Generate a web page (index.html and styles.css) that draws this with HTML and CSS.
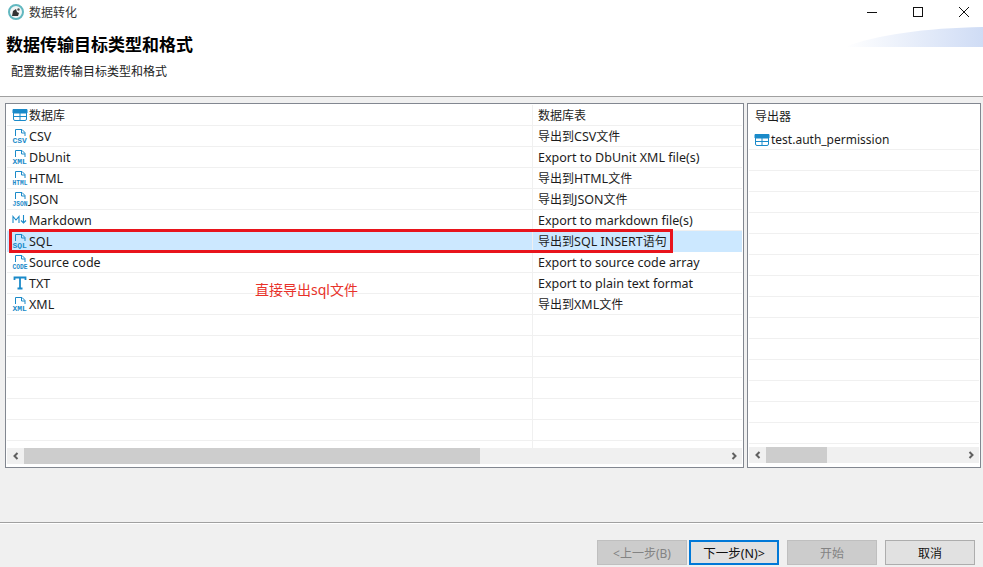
FILE: index.html
```html
<!DOCTYPE html>
<html lang="zh-CN">
<head>
    <meta charset="UTF-8">
    <meta name="viewport" content="width=device-width, initial-scale=1.0">
    <title>数据转化</title>
    <link rel="stylesheet" href="styles.css">
</head>
<body>
    <svg class="defs" width="0" height="0">
        <symbol id="file" viewBox="0 0 16 16">
            <path d="M3.500 8V1.500h6.500l3 3V8M9.500 1.500V5h3.500" fill="none" stroke="#1a8ac9" stroke-width="1"/>
        </symbol>
        <symbol id="table" viewBox="0 0 16 16">
            <rect x="1.500" y="2.500" width="13" height="11" rx="1.500" fill="#fff" stroke="#1a8ac9"/>
            <path d="M1 2.500h14V6H1zM8 6v8M1 9.500h14" fill="#1a8ac9" stroke="#1a8ac9"/>
        </symbol>
        <symbol id="left" viewBox="0 0 8 8">
            <path d="M5.500 1L2.500 4l3 3" fill="none" stroke="#606060" stroke-width="2"/>
        </symbol>
        <symbol id="right" viewBox="0 0 8 8">
            <path d="M2.500 1l3 3-3 3" fill="none" stroke="#606060" stroke-width="2"/>
        </symbol>
    </svg>

    <div class="header">
        <svg class="swoosh" width="138" height="21" viewBox="0 0 138 21">
            <defs>
                <linearGradient id="swooshFill" x1="0" x2="1" y1="0" y2="0">
                    <stop offset="0" stop-color="#ffffff"/>
                    <stop offset="1" stop-color="#cfdcf5"/>
                </linearGradient>
            </defs>
            <path d="M0 20C30 8 80 1 138 0V20Z" fill="url(#swooshFill)"/>
        </svg>
        <div class="titlebar">
            <svg class="logo" width="16" height="16" viewBox="0 0 16 16">
                <circle cx="8" cy="8" r="7" fill="#f2f6f6" stroke="#62b8c0" stroke-width="2"/>
                <path d="M4 12l1-5 3-2 1 3 2 1-1 3z" fill="#333"/>
                <circle cx="10.500" cy="5.500" r="1.200" fill="#555"/>
            </svg>
            <span class="window-title">数据转化</span>
            <div class="window-controls">
                <svg width="12" height="12" viewBox="0 0 12 12"><path d="M1 6.500h10" stroke="#111"/></svg>
                <svg width="12" height="12" viewBox="0 0 12 12"><rect x="1.500" y="1.500" width="9" height="9" fill="none" stroke="#111"/></svg>
                <svg width="12" height="12" viewBox="0 0 12 12"><path d="M1 1l10 10M11 1L1 11" stroke="#111"/></svg>
            </div>
        </div>
        <h1>数据传输目标类型和格式</h1>
        <p class="subtitle">配置数据传输目标类型和格式</p>
    </div>

    <div class="content">
        <div class="panel panel-main">
            <div class="row">
                <div class="cell name"><svg class="icon"><use href="#table"/></svg><span class="zh">数据库</span></div>
                <div class="cell"><span class="zh">数据库表</span></div>
            </div>
            <div class="row">
                <div class="cell name"><svg class="icon"><use href="#file"/><text x="0.500" y="14.500" class="tag">CSV</text></svg>CSV</div>
                <div class="cell"><span class="zh">导出到</span>CSV<span class="zh">文件</span></div>
            </div>
            <div class="row">
                <div class="cell name"><svg class="icon"><use href="#file"/><text x="0.500" y="14.500" class="tag">XML</text></svg>DbUnit</div>
                <div class="cell">Export to DbUnit XML file(s)</div>
            </div>
            <div class="row">
                <div class="cell name"><svg class="icon"><use href="#file"/><text transform="translate(0.500 14.500) scale(0.78 1)" class="tag">HTML</text></svg>HTML</div>
                <div class="cell"><span class="zh">导出到</span>HTML<span class="zh">文件</span></div>
            </div>
            <div class="row">
                <div class="cell name"><svg class="icon"><use href="#file"/><text transform="translate(0.500 14.500) scale(0.78 1)" class="tag">JSON</text></svg>JSON</div>
                <div class="cell"><span class="zh">导出到</span>JSON<span class="zh">文件</span></div>
            </div>
            <div class="row">
                <div class="cell name"><svg class="icon"><path d="M1 11V4.500l3 3.500 3-3.500V11M11.500 3v8M9 8.500l2.500 2.500L14 8.500" fill="none" stroke="#1a8ac9" stroke-width="1.100"/></svg>Markdown</div>
                <div class="cell">Export to markdown file(s)</div>
            </div>
            <div class="row selected">
                <div class="cell name"><svg class="icon"><use href="#file"/><text x="0.500" y="14.500" class="tag">SQL</text></svg>SQL</div>
                <div class="cell"><span class="zh">导出到</span>SQL INSERT<span class="zh">语句</span></div>
            </div>
            <div class="row">
                <div class="cell name"><svg class="icon"><use href="#file"/><text transform="translate(0.500 14.500) scale(0.78 1)" class="tag">CODE</text></svg>Source code</div>
                <div class="cell">Export to source code array</div>
            </div>
            <div class="row">
                <div class="cell name"><svg class="icon"><path d="M2.500 5V2.500h11V5M8 2.500v10.500M5.500 13.500h5" fill="none" stroke="#1a8ac9" stroke-width="1.800"/></svg>TXT</div>
                <div class="cell">Export to plain text format</div>
            </div>
            <div class="row">
                <div class="cell name"><svg class="icon"><use href="#file"/><text x="0.500" y="14.500" class="tag">XML</text></svg>XML</div>
                <div class="cell"><span class="zh">导出到</span>XML<span class="zh">文件</span></div>
            </div>
            <div class="row"><div class="cell name"></div><div class="cell"></div></div>
            <div class="row"><div class="cell name"></div><div class="cell"></div></div>
            <div class="row"><div class="cell name"></div><div class="cell"></div></div>
            <div class="row"><div class="cell name"></div><div class="cell"></div></div>
            <div class="row"><div class="cell name"></div><div class="cell"></div></div>
            <div class="row"><div class="cell name"></div><div class="cell"></div></div>
            <div class="filler"><div class="name"></div></div>
            <div class="scrollbar">
                <span class="arrow"><svg width="8" height="8"><use href="#left"/></svg></span>
                <div class="track"><div class="thumb thumb-main"></div></div>
                <span class="arrow"><svg width="8" height="8"><use href="#right"/></svg></span>
            </div>
            <div class="callout"></div>
            <div class="note">直接导出sql文件</div>
        </div>

        <div class="panel panel-side">
            <div class="side-head">导出器</div>
            <div class="row"><div class="cell side-cell"><svg class="icon"><use href="#table"/></svg>test.auth_permission</div></div>
            <div class="row"></div><div class="row"></div><div class="row"></div><div class="row"></div>
            <div class="row"></div><div class="row"></div><div class="row"></div><div class="row"></div>
            <div class="row"></div><div class="row"></div><div class="row"></div><div class="row"></div>
            <div class="row"></div><div class="row"></div>
            <div class="filler-side"></div>
            <div class="scrollbar">
                <span class="arrow"><svg width="8" height="8"><use href="#left"/></svg></span>
                <div class="track"><div class="thumb thumb-side"></div></div>
                <span class="arrow"><svg width="8" height="8"><use href="#right"/></svg></span>
            </div>
        </div>
    </div>

    <div class="footer">
        <button class="btn" disabled>&lt;上一步(B)</button>
        <button class="btn btn-default">下一步(N)&gt;</button>
        <button class="btn btn-start" disabled>开始</button>
        <button class="btn btn-cancel">取消</button>
    </div>
</body>
</html>
```

FILE: styles.css
```css
body {
    margin: 0;
    width: 983px;
    height: 567px;
    overflow: hidden;
    display: flex;
    flex-direction: column;
    background-color: #f0f0f0;
    color: #1c1c1c;
    font-family: "Noto Sans", "Noto Sans CJK SC", sans-serif;
    font-size: 12px;
}
.defs {
    display: block;
    height: 0;
}
.header {
    position: relative;
    height: 96px;
    flex-shrink: 0;
    background: #fff;
    border-bottom: 1px solid #a0a0a0;
}
.swoosh {
    position: absolute;
    top: 27px;
    right: 0;
}
.titlebar {
    display: flex;
    align-items: center;
    height: 23px;
    padding-left: 8px;
}
.logo {
    margin-right: 5px;
}
.window-title {
    color: #333;
}
.window-controls {
    display: flex;
    gap: 34px;
    margin-left: auto;
    margin-right: 13px;
}
h1 {
    margin: 10px 0 0 6px;
    font-size: 17px;
    line-height: 24px;
    color: #000;
}
.subtitle {
    margin: 5px 0 0 11px;
    line-height: 20px;
    color: #222;
}
.content {
    flex: 1;
    display: flex;
    gap: 3px;
    padding: 6px 2px 0 5px;
}
.panel {
    position: relative;
    height: 361px;
    background: #fff;
    border: 1px solid #828790;
    padding: 1px 1px 1px;
}
.panel-main {
    width: 735px;
}
.panel-side {
    flex: 1;
}
.row {
    display: flex;
    height: 20px;
    border-bottom: 1px solid #f0f0f0;
}
.row.selected {
    background: #cce8ff;
    border-bottom-color: #cce8ff;
}
.cell {
    display: flex;
    align-items: center;
    padding: 1px 0 0 5px;
    white-space: pre;
    font-size: 12.5px;
    line-height: 20px;
}
.cell .icon {
    margin-top: -1px;
}
.zh {
    font-size: 12px;
}
.side-cell {
    font-size: 12px;
    padding-top: 2px;
}
.name {
    width: 520px;
    border-right: 1px solid #f0f0f0;
}
.icon {
    width: 16px;
    height: 16px;
    margin-right: 1px;
    flex-shrink: 0;
}
.tag {
    font-family: "Liberation Mono", monospace;
    font-size: 8px;
    font-weight: bold;
    fill: #1a8ac9;
}
.filler {
    height: 7px;
}
.filler .name {
    width: 525px;
    height: 7px;
}
.filler-side {
    height: 3px;
}
.side-head {
    height: 24px;
    padding-left: 6px;
    line-height: 23px;
    font-size: 12px;
}
.scrollbar {
    display: flex;
    height: 16px;
    background: #f0f0f0;
}
.arrow {
    display: flex;
    align-items: center;
    justify-content: center;
    width: 17px;
    flex-shrink: 0;
}
.track {
    flex: 1;
}
.thumb {
    height: 16px;
    background: #cdcdcd;
}
.thumb-main {
    width: 456px;
}
.thumb-side {
    width: 61px;
}
.callout {
    position: absolute;
    left: 3px;
    top: 125px;
    width: 658px;
    height: 18px;
    border: 3px solid #e8141c;
}
.note {
    position: absolute;
    left: 249px;
    top: 176px;
    color: #e8322a;
    font-size: 14px;
    line-height: 20px;
}
.footer {
    height: 45px;
    flex-shrink: 0;
    display: flex;
    justify-content: flex-end;
    align-items: flex-start;
    padding: 17px 8px 0 0;
    border-top: 1px solid #a0a0a0;
    box-shadow: inset 0 1px 0 #fff;
    box-sizing: border-box;
}
.btn {
    width: 90px;
    height: 25px;
    margin-left: 2px;
    padding: 0;
    background: #e1e1e1;
    border: 1px solid #adadad;
    color: #111;
    font-family: inherit;
    font-size: 12px;
}
.btn:disabled {
    background: #cccccc;
    border-color: #bfbfbf;
    color: #838383;
}
.btn-default {
    border: 2px solid #0078d7;
    font-size: 12.5px;
}
.btn-start {
    margin-left: 8px;
}
.btn-cancel {
    margin-left: 8px;
}
```
